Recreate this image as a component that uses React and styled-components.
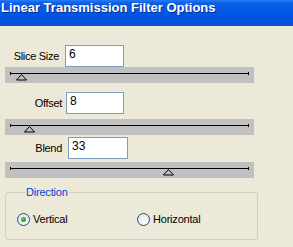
import React from "react";
import styled, { createGlobalStyle } from "styled-components";

const Global = createGlobalStyle`
  html, body { margin: 0; padding: 0; background: #ece9d8; }
  body { width: 293px; height: 247px; overflow: hidden; font-family: "Liberation Sans", Arial, sans-serif; }
`;

const Window = styled.div`
  width: 293px;
  height: 247px;
  background: #ece9d8;
  display: flex;
  flex-direction: column;
`;

const TitleBar = styled.div`
  height: 26px;
  line-height: 26px;
  padding-left: 1px;
  color: #ffffff;
  font: bold 13px "Liberation Sans", Arial, sans-serif;
  white-space: nowrap;
  background: linear-gradient(
    to bottom,
    #2a7cf3 0px,
    #0a5fe8 3px,
    #0058e6 12px,
    #0054e0 20px,
    #0a4fd2 26px
  );
  text-shadow: 1px 1px 0 #0a2c8c;
`;

const Body = styled.div`
  display: flex;
  flex-direction: column;
  padding-top: 19px;
`;

const Row = styled.div`
  display: flex;
  align-items: flex-start;
  height: 22px;
  margin-top: ${(p) => p.$top}px;
`;

const Label = styled.span`
  width: ${(p) => p.$width}px;
  padding-right: ${(p) => p.$gap}px;
  text-align: right;
  font-size: 11px;
  letter-spacing: -0.3px;
  color: #000;
  line-height: 22px;
  flex-shrink: 0;
`;

const Input = styled.div`
  box-sizing: border-box;
  width: ${(p) => p.$width}px;
  height: 22px;
  background: #fff;
  border: 1px solid #7f9db9;
  padding: 1px 0 0 3px;
  font-size: 12px;
  line-height: 14px;
  color: #000;
`;

const Track = styled.div`
  position: relative;
  box-sizing: border-box;
  margin: ${(p) => p.$top}px 0 0 5px;
  width: 249px;
  height: 16px;
  background: #c0c0c0;
  padding: 6px 5px 0 5px;
`;

const Line = styled.div`
  position: relative;
  height: 1px;
  background: #000;
  &::before,
  &::after {
    content: "";
    position: absolute;
    top: -1px;
    width: 1px;
    height: 3px;
    background: #000;
  }
  &::before { left: 0; }
  &::after { right: 0; }
`;

const Thumb = styled.svg`
  position: absolute;
  top: 7px;
  width: 11px;
  height: 7px;
  overflow: visible;
`;

const Group = styled.fieldset`
  margin: 9px 0 0 5px;
  width: 252px;
  box-sizing: border-box;
  border: 1px solid #d0d0bf;
  border-radius: 3px;
  padding: 15px 0 13px 11px;
  display: flex;
`;

const Legend = styled.legend`
  margin-left: 8px;
  padding: 0 1px;
  font-size: 11px;
  line-height: 11px;
  letter-spacing: -0.2px;
  color: #0046d5;
`;

const RadioItem = styled.label`
  display: flex;
  align-items: center;
  width: 120px;
  gap: 3px;
  font-size: 11px;
  letter-spacing: -0.2px;
  color: #000;
  line-height: 13px;
`;

const RadioCircle = styled.span`
  box-sizing: border-box;
  width: 13px;
  height: 13px;
  border-radius: 50%;
  border: 1px solid #1c5180;
  background: radial-gradient(circle at 65% 65%, #ffffff 0%, #f0f0ea 45%, #d8d8cf 100%);
  display: flex;
  align-items: center;
  justify-content: center;
  flex-shrink: 0;
  &::after {
    content: "";
    display: ${(p) => (p.$checked ? "block" : "none")};
    width: 5px;
    height: 5px;
    border-radius: 50%;
    background: radial-gradient(circle at 40% 40%, #55d255 0%, #21a121 60%, #178a17 100%);
  }
`;

const fields = [
  { label: "Slice Size", value: "6", labelW: 59, gap: 6, inputW: 59, rowTop: 0, trackTop: 0, pos: 11 },
  { label: "Offset", value: "8", labelW: 62, gap: 4, inputW: 58, rowTop: 9, trackTop: 5, pos: 19 },
  { label: "Blend", value: "33", labelW: 62, gap: 6, inputW: 60, rowTop: 2, trackTop: 3, pos: 158 },
];

function Slider({ top, pos }) {
  return (
    <Track $top={top}>
      <Line />
      <Thumb style={{ left: 5 + pos - 5.5 }} viewBox="0 0 11 7">
        <polygon points="5.5,0.5 10.5,6 0.5,6" fill="none" stroke="#000" strokeWidth="1" />
      </Thumb>
    </Track>
  );
}

export default function App() {
  return (
    <>
      <Global />
      <Window>
        <TitleBar>Linear Transmission Filter Options</TitleBar>
        <Body>
          {fields.map((f) => (
            <React.Fragment key={f.label}>
              <Row $top={f.rowTop}>
                <Label $width={f.labelW} $gap={f.gap}>{f.label}</Label>
                <Input $width={f.inputW}>{f.value}</Input>
              </Row>
              <Slider top={f.trackTop} pos={f.pos} />
            </React.Fragment>
          ))}
          <Group>
            <Legend>Direction</Legend>
            <RadioItem>
              <RadioCircle $checked />
              Vertical
            </RadioItem>
            <RadioItem>
              <RadioCircle />
              Horizontal
            </RadioItem>
          </Group>
        </Body>
      </Window>
    </>
  );
}
